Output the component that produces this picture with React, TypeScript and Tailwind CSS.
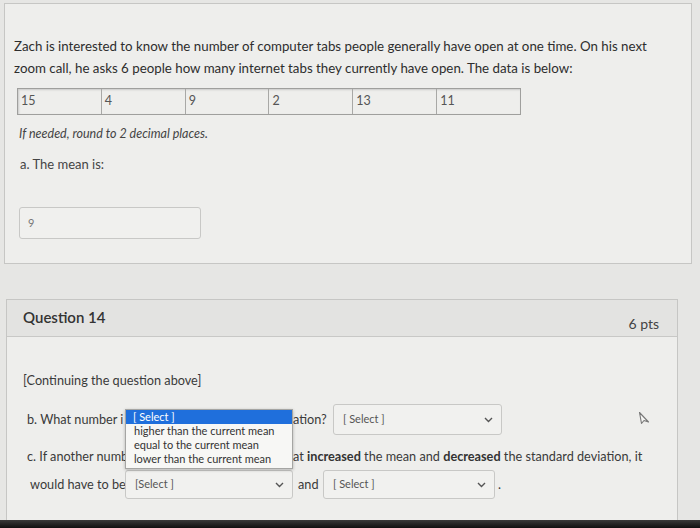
import React from "react";

const values = ["15", "4", "9", "2", "13", "11"];

function Chevron() {
    return (
        <svg width="9" height="6" viewBox="0 0 9 6" className="shrink-0">
            <path d="M1 1l3.5 3.5L8 1" fill="none" stroke="#555" strokeWidth="1.4" />
        </svg>
    );
}

function SelectBox({ width, height, label }: { width: string; height: string; label: string }) {
    return (
        <div className={`${width} ${height} flex shrink-0 items-center justify-between rounded-[3px] border border-[#c8c8c6] bg-[#f1f1ef] pl-[9px] pr-[8px] text-[11px] text-[#555]`}>
            <span>{label}</span>
            <Chevron />
        </div>
    );
}

export default function App() {
    return (
        <div className="relative flex h-[528px] w-[700px] flex-col overflow-hidden bg-[#e6e6e4] font-['Lato','Noto_Sans',sans-serif] text-[#333]">
            {/* question 13, bottom part */}
            <div className="ml-[4px] mt-[3px] h-[261px] w-[688px] shrink-0 border border-[#c6c6c4] bg-[#eeeeec] pl-[9px] pt-[31px]">
                <p className="text-[13.3px] leading-[22px] text-[#2d2d2d]">
                    Zach is interested to know the number of computer tabs people generally have open at one time. On his next
                    <br />
                    zoom call, he asks 6 people how many internet tabs they currently have open. The data is below:
                </p>
                <div className="ml-[3px] mt-[9px] flex h-[27px] w-[504px] border border-[#9f9f9d] shadow-[inset_1px_1px_2px_rgba(0,0,0,0.15)]">
                    {values.map((v, i) => (
                        <div
                            key={i}
                            className={`flex flex-1 items-center pl-[3px] text-[12.5px] text-[#555] ${i > 0 ? "border-l border-[#a8a8a6]" : ""}`}
                        >
                            {v}
                        </div>
                    ))}
                </div>
                <p className="ml-[5px] mt-[9px] text-[12.5px] italic leading-[20px] text-[#444]">If needed, round to 2 decimal places.</p>
                <p className="ml-[6px] mt-[10px] text-[13px] leading-[20px] text-[#444]">a. The mean is:</p>
                <div className="ml-[5px] mt-[33px] flex h-[32px] w-[182px] items-center rounded-[3px] border border-[#c8c8c6] bg-[#f0f0ee] pl-[8px] text-[11px] text-[#777]">
                    9
                </div>
            </div>

            {/* question 14 */}
            <div className="ml-[6px] mt-[35px] flex w-[672px] flex-1 flex-col border border-b-0 border-[#c6c6c4] bg-[#eeeeec]">
                <div className="flex h-[37px] shrink-0 items-start justify-between border-b border-[#c8c8c6] bg-[#e3e3e1] pl-[16px] pr-[18px]">
                    <span className="pt-[6px] text-[15px] font-semibold text-[#333]">Question 14</span>
                    <span className="pt-[13px] text-[14px] text-[#444]">6 pts</span>
                </div>
                <div className="relative pl-[16px] pt-[34px] text-[12.7px] text-[#3a3a3a]">
                    <p className="leading-[18px]">[Continuing the question above]</p>

                    <div className="mt-[15px] flex h-[31px] items-center whitespace-nowrap">
                        <span className="ml-[4px] w-[98px]">b. What number i</span>
                        <span className="w-[168px] shrink-0" />
                        <span className="w-[40px] shrink-0">ation?</span>
                        <SelectBox width="w-[169px]" height="h-[31px]" label="[ Select ]" />
                    </div>

                    <div className="mt-[12px] flex items-center whitespace-nowrap leading-[18px]">
                        <span className="ml-[4px] w-[98px]">c. If another numb</span>
                        <span className="w-[168px] shrink-0" />
                        <span>
                            at <b className="font-bold text-[#333]">increased</b> the mean and <b className="font-bold text-[#333]">decreased</b> the standard deviation, it
                        </span>
                    </div>

                    <div className="mt-[5px] flex h-[29px] items-center whitespace-nowrap">
                        <span className="ml-[7px] w-[95px]">would have to be</span>
                        <SelectBox width="w-[168px]" height="h-[29px]" label="[Select ]" />
                        <span className="ml-[5px] w-[25px]">and</span>
                        <SelectBox width="w-[172px]" height="h-[29px]" label="[ Select ]" />
                        <span className="ml-[3px]">.</span>
                    </div>

                    {/* open dropdown list of the "would have to be" select */}
                    <div className="absolute left-[118px] top-[72px] w-[168px] border border-[#a5a5a3] bg-[#f7f7f5] pb-[2px] text-[11px] leading-[14px] text-[#333] shadow-[0_1px_3px_rgba(0,0,0,0.25)]">
                        <div className="bg-[#1f6fdc] pl-[7px] text-white">[ Select ]</div>
                        <div className="pl-[8px]">higher than the current mean</div>
                        <div className="pl-[8px]">equal to the current mean</div>
                        <div className="pl-[8px]">lower than the current mean</div>
                    </div>

                    {/* mouse pointer */}
                    <svg className="absolute left-[631px] top-[74px]" width="14" height="16" viewBox="0 0 14 16">
                        <path d="M1.5 1.5l2 11 2.5-3 4.5 1.5z" fill="#f4f4f2" stroke="#777" strokeWidth="1.1" strokeLinejoin="round" />
                    </svg>
                </div>
            </div>

            {/* screen bezel */}
            <div className="h-[8px] shrink-0 bg-gradient-to-b from-[#3a3a3a] to-[#111]" />
        </div>
    );
}
